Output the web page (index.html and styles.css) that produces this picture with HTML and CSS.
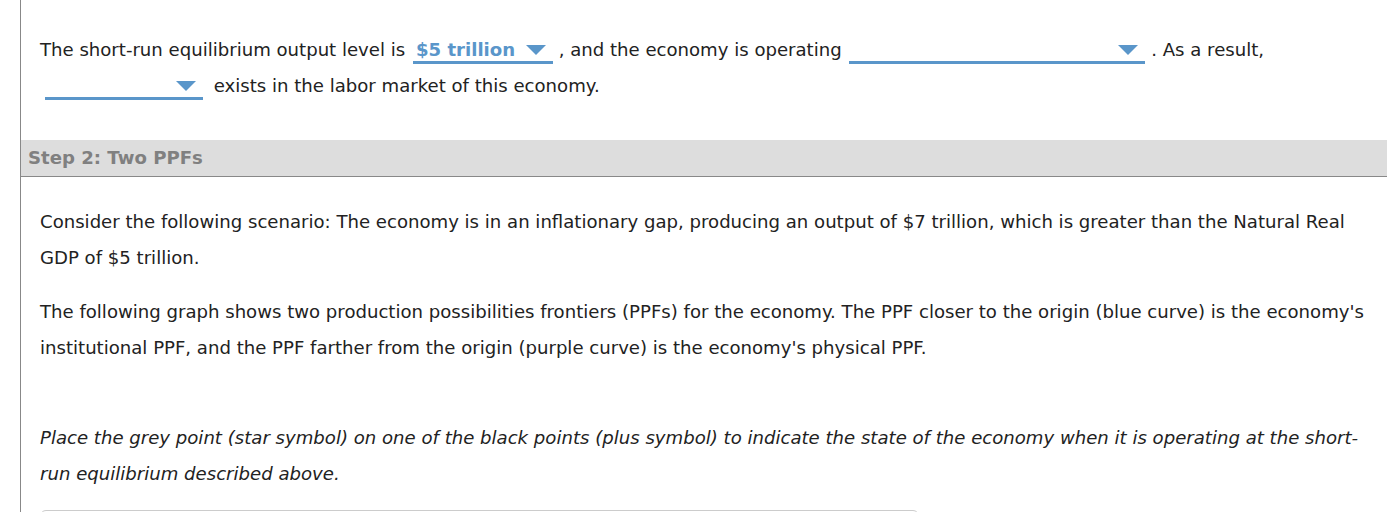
FILE: index.html
```html
<!DOCTYPE html>
<html>
<head>
<meta charset="utf-8">
<link rel="stylesheet" href="styles.css">
</head>
<body>
<div class="page">
  <div class="question">
    <p class="line">The short-run equilibrium output level is <span class="dd dd-1"><span class="dd-val">$5 trillion</span><span class="caret"></span></span> , and the economy is operating <span class="dd dd-2"><span class="caret"></span>&nbsp;</span> . As a result, <span class="dd dd-3"><span class="caret"></span>&nbsp;</span> exists in the labor market of this economy.</p>
  </div>
  <div class="step-head">Step 2: Two PPFs</div>
  <div class="step-body">
    <p class="para">Consider the following scenario: The economy is in an inflationary gap, producing an output of $7 trillion, which is greater than the Natural Real GDP of $5 trillion.</p>
    <p class="para">The following graph shows two production possibilities frontiers (PPFs) for the economy. The PPF closer to the origin (blue curve) is the economy's institutional PPF, and the PPF farther from the origin (purple curve) is the economy's physical PPF.</p>
    <p class="para instr">Place the grey point (star symbol) on one of the black points (plus symbol) to indicate the state of the economy when it is operating at the short-run equilibrium described above.</p>
    <div class="graph-box"></div>
  </div>
</div>
</body>
</html>
```

FILE: styles.css
```css
html, body {
  margin: 0;
  padding: 0;
  background: #fff;
}
body {
  font-family: "DejaVu Sans", Verdana, sans-serif;
  font-size: 18.1px;
  color: #222;
  overflow: hidden;
}
.page {
  margin-left: 20px;
  border-left: 1px solid #888;
  min-height: 512px;
}
.question {
  padding: 32px 19px 36px 19px;
}
.line {
  margin: 0;
  line-height: 36px;
}
.dd {
  display: inline-block;
  line-height: 22px;
  border-bottom: 3px solid #5a96ca;
  padding: 0 7px 0 3px;
  text-align: left;
}
.dd-1 { width: 130px; margin-left: 2px; }
.dd-2 { width: 286px; margin-left: 2px; }
.dd-3 { width: 148px; margin-left: 5px; margin-right: 5px; }
.dd-val {
  font-weight: bold;
  color: #5a96ca;
}
.caret {
  float: right;
  width: 0;
  height: 0;
  border-left: 10px solid transparent;
  border-right: 10px solid transparent;
  border-top: 10px solid #5a96ca;
  margin-top: 6px;
}
.step-head {
  background: #dddddd;
  border-bottom: 1px solid #888;
  color: #808080;
  font-weight: bold;
  padding: 0 7px;
  height: 36px;
  line-height: 36px;
}
.step-body {
  padding: 27px 19px 0 19px;
}
.para {
  margin: 0 0 18px 0;
  line-height: 36px;
}
.instr {
  font-style: italic;
  margin-top: 54px;
}
.graph-box {
  width: 877px;
  height: 40px;
  border: 1px solid #ccc;
  border-radius: 6px;
  margin-top: 18px;
}
```
